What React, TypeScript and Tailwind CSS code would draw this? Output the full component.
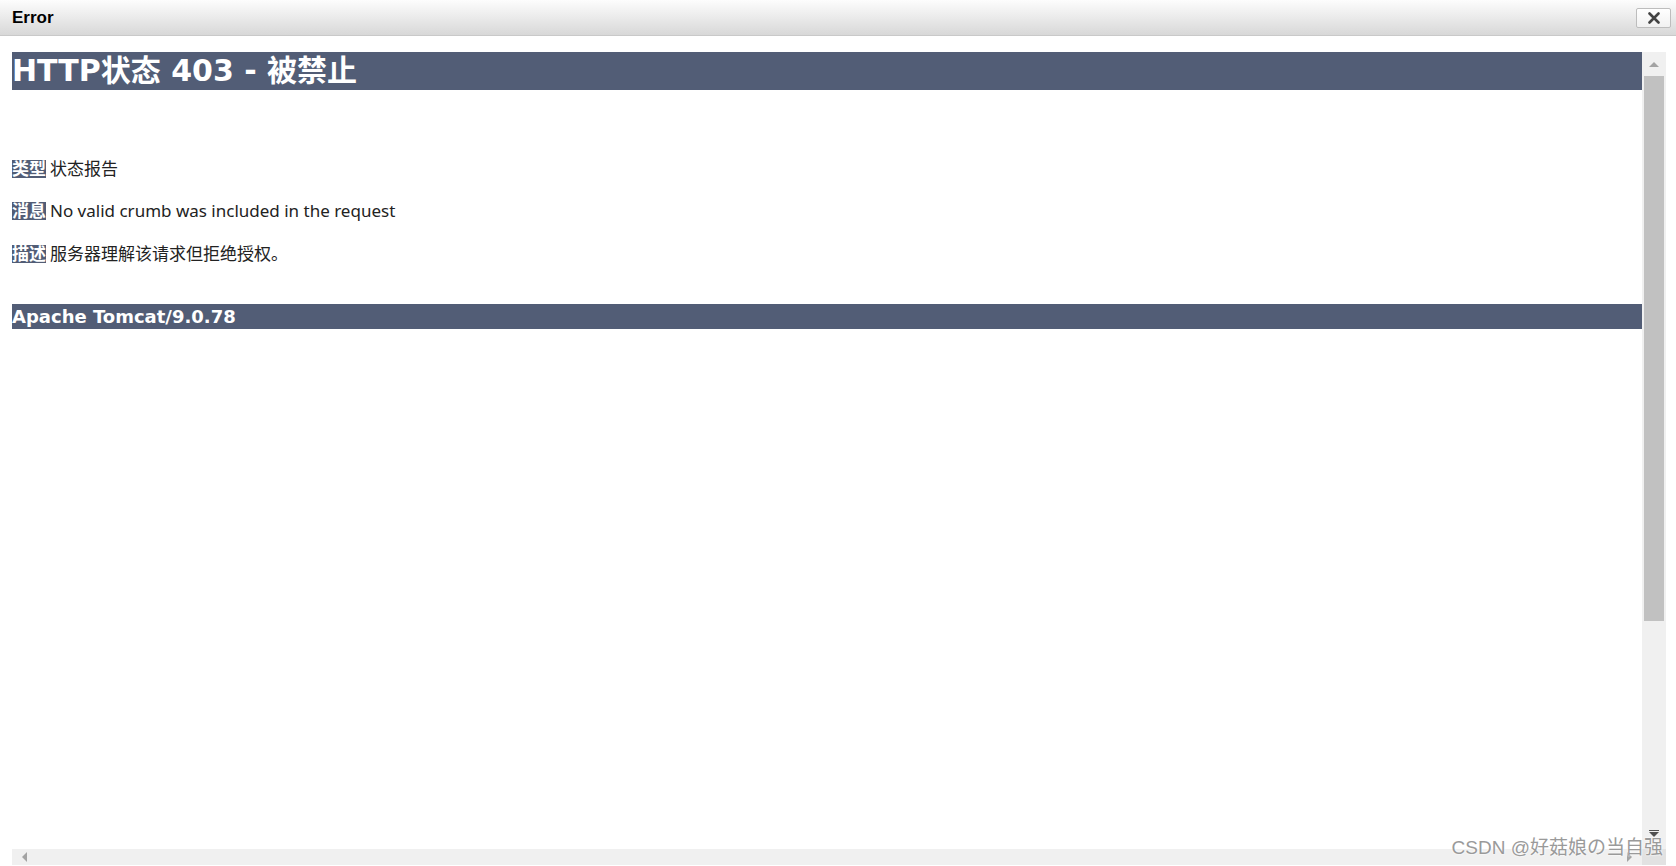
import React from "react";

const bodyFont = { fontFamily: '"Noto Sans", "Noto Sans CJK SC", sans-serif' };
const tahoma = { fontFamily: '"DejaVu Sans", "Noto Sans CJK SC", sans-serif' };

const rows = [
  { label: "类型", text: "状态报告", mt: "mt-0" },
  { label: "消息", text: "No valid crumb was included in the request", mt: "mt-[24px]" },
  { label: "描述", text: "服务器理解该请求但拒绝授权。", mt: "mt-[25px]" },
];

export default function App() {
  return (
    <div className="relative w-[1676px] h-[866px] overflow-hidden bg-white">
      {/* title bar */}
      <div className="h-[36px] flex items-center justify-between pl-[12px] pr-[5px] border-b border-[#c9c9c9] bg-gradient-to-b from-[#fdfdfd] to-[#d8d8d8]">
        <span className="text-[17px] font-bold text-black" style={{ fontFamily: '"Liberation Sans", Arial, sans-serif' }}>
          Error
        </span>
        <button className="w-[35px] h-[20px] flex items-center justify-center rounded-[2px] border border-[#bdbdbd] bg-gradient-to-b from-white to-[#f1f1f1]">
          <svg width="12" height="12" viewBox="0 0 12 12">
            <path d="M1.5 1.5 L10.5 10.5 M10.5 1.5 L1.5 10.5" stroke="#444" strokeWidth="2.6" strokeLinecap="round" />
          </svg>
        </button>
      </div>

      <div className="flex pl-[12px] pt-[16px]">
        <div className="w-[1654px] h-[813px] flex flex-col">
          <div className="flex flex-1 min-h-0">
            {/* page content */}
            <div className="flex-1">
              <h1 className="h-[38px] leading-[38px] bg-[#525D76] text-white text-[30px] font-bold whitespace-nowrap" style={tahoma}>
                HTTP状态 403 - 被禁止
              </h1>
              <div className="mt-[70px]">
                {rows.map((r) => (
                  <div key={r.label} className={`flex items-center h-[18px] ${r.mt}`}>
                    <span className="h-[18px] leading-[18px] bg-[#525D76] text-white text-[17px] font-bold" style={bodyFont}>
                      {r.label}
                    </span>
                    <span className="ml-[4px] text-[17px] text-[#222]" style={bodyFont}>
                      {r.text}
                    </span>
                  </div>
                ))}
              </div>
              <h3 className="mt-[41px] h-[25px] leading-[25px] bg-[#525D76] text-white text-[18px] font-bold whitespace-nowrap" style={tahoma}>
                Apache Tomcat/9.0.78
              </h3>
            </div>
            {/* vertical scrollbar */}
            <div className="w-[24px] bg-[#f0f0f0] flex flex-col items-center">
              <div className="h-[24px] flex items-center justify-center">
                <div className="w-0 h-0 border-l-[5px] border-r-[5px] border-b-[5px] border-l-transparent border-r-transparent border-b-[#a3a3a3]" />
              </div>
              <div className="w-[20px] h-[545px] bg-[#c1c1c1]" />
              <div className="flex-1" />
              <div className="h-[24px] flex flex-col items-center pt-[5px]">
                <div className="w-[10px] h-[1px] bg-[#505050]" />
                <div className="mt-[1px] w-0 h-0 border-l-[5px] border-r-[5px] border-t-[5px] border-l-transparent border-r-transparent border-t-[#505050]" />
              </div>
            </div>
          </div>
          {/* horizontal scrollbar */}
          <div className="h-[16px] flex">
            <div className="flex-1 bg-[#f0f0f0] flex items-center justify-between px-[10px]">
              <div className="w-0 h-0 border-t-[5px] border-b-[5px] border-r-[5px] border-t-transparent border-b-transparent border-r-[#a3a3a3]" />
              <div className="w-0 h-0 border-t-[5px] border-b-[5px] border-l-[5px] border-t-transparent border-b-transparent border-l-[#a3a3a3]" />
            </div>
            <div className="w-[24px] bg-[#e2e2e2]" />
          </div>
        </div>
      </div>

      {/* watermark */}
      <div
        className="absolute right-[13px] bottom-[9px] text-[19px] text-[#9a9a9a] leading-none whitespace-nowrap"
        style={{ fontFamily: '"Liberation Sans", "Noto Sans CJK SC", sans-serif', textShadow: "0 0 2px #fff, 0 0 2px #fff" }}
      >
        CSDN @好菇娘の当自强
      </div>
    </div>
  );
}
